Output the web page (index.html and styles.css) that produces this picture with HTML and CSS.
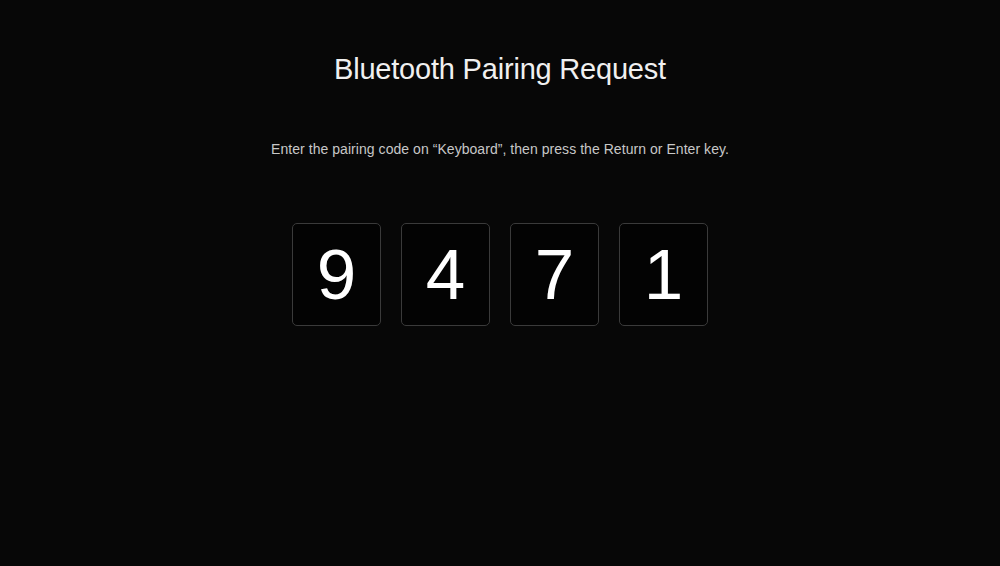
FILE: index.html
```html
<!DOCTYPE html>
<html>
<head>
<meta charset="utf-8">
<link rel="stylesheet" href="styles.css">
</head>
<body>
<main class="screen">
  <h1 class="title">Bluetooth Pairing Request</h1>
  <p class="hint">Enter the pairing code on “Keyboard”, then press the Return or Enter key.</p>
  <div class="code">
    <div class="digit">9</div>
    <div class="digit">4</div>
    <div class="digit">7</div>
    <div class="digit">1</div>
  </div>
</main>
</body>
</html>
```

FILE: styles.css
```css
html, body {
  margin: 0;
  padding: 0;
  background: #070707;
}
.screen {
  width: 1000px;
  height: 566px;
  display: flex;
  flex-direction: column;
  align-items: center;
  font-family: "Liberation Sans", Arial, sans-serif;
  color: #f2f2f2;
}
.title {
  margin: 52px 0 0;
  font-size: 29px;
  font-weight: normal;
  line-height: 34px;
  letter-spacing: -0.2px;
  color: #f0f0f0;
}
.hint {
  margin: 55px 0 0;
  font-size: 14px;
  line-height: 16px;
  color: #c8c8c8;
  letter-spacing: 0.05px;
}
.code {
  margin-top: 66px;
  display: flex;
  gap: 20px;
}
.digit {
  width: 87px;
  height: 101px;
  border: 1px solid #3a3a3a;
  border-radius: 5px;
  background: #030303;
  display: flex;
  align-items: center;
  justify-content: center;
  font-size: 71px;
  line-height: 1;
  color: #ffffff;
}
```
